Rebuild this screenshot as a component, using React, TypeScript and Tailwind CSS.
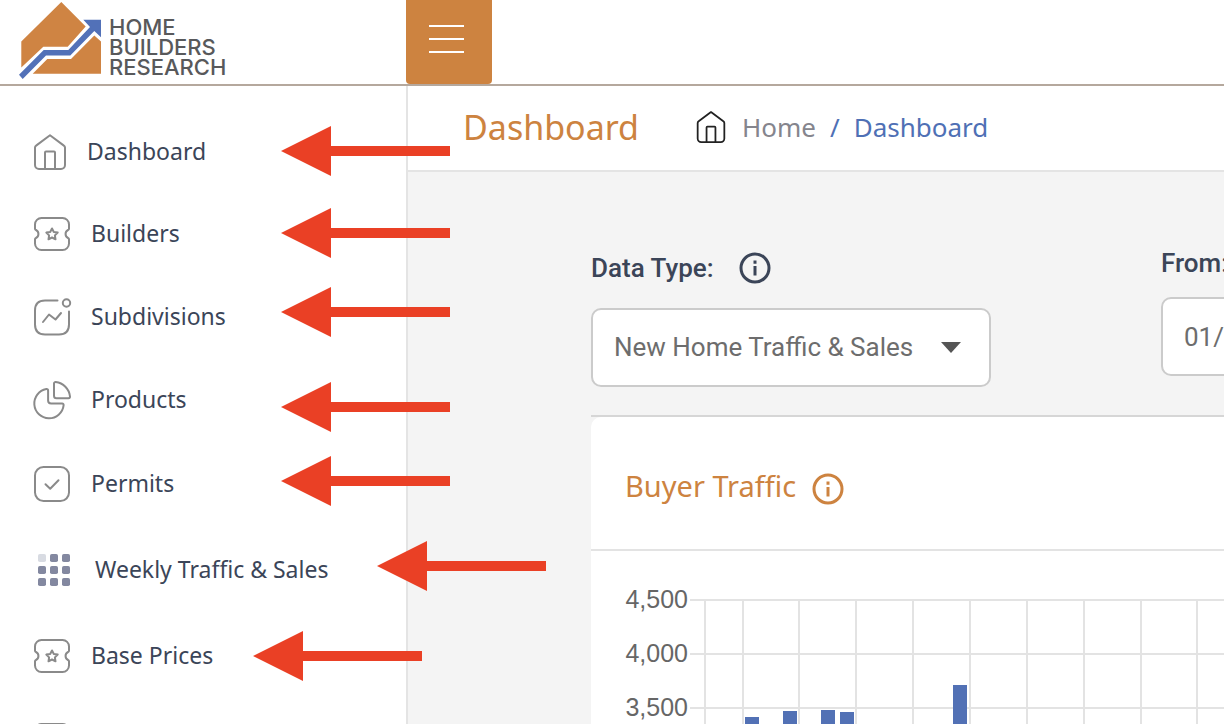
import React from "react";

const HomeIcon = ({ className }: { className: string }) => (
  <svg className={className} viewBox="0 0 32 36" fill="none" stroke="currentColor" strokeWidth="2" strokeLinejoin="round">
    <path d="M1 13.6a2.5 2.5 0 0 1 1.1-2L16 1.2l13.9 10.4a2.5 2.5 0 0 1 1.1 2V31a4 4 0 0 1-4 4H5a4 4 0 0 1-4-4z" />
    <path d="M11 35V18.5a1 1 0 0 1 1-1h8a1 1 0 0 1 1 1V35" />
  </svg>
);

const TicketIcon = () => (
  <svg className="h-[34px] w-9" viewBox="0 0 36 34" fill="none" stroke="currentColor" strokeWidth="2" strokeLinejoin="round">
    <path d="M7.5 1h21A6.5 6.5 0 0 1 35 7.5v4.2c0 .6-.4 1-1 1.3a4.5 4.5 0 0 0 0 8c.6.3 1 .7 1 1.3v4.2a6.5 6.5 0 0 1-6.5 6.5h-21A6.5 6.5 0 0 1 1 26.5v-4.2c0-.6.4-1 1-1.3a4.5 4.5 0 0 0 0-8c-.6-.3-1-.7-1-1.3V7.5A6.5 6.5 0 0 1 7.5 1z" />
    <path d="M18 11.5l1.800 3.500 3.900.6-2.800 2.800.6 3.900-3.500-1.800-3.500 1.800.6-3.900-2.800-2.800 3.900-.6z" />
  </svg>
);

const TrendIcon = () => (
  <svg className="h-[38px] w-9 overflow-visible" viewBox="0 0 36 38" fill="none" stroke="currentColor" strokeWidth="2" strokeLinecap="round" strokeLinejoin="round">
    <path d="M23.500 2.500H11C4 2.500 1 5.500 1 12.500v14c0 7 3 10 10 10h14c7 0 10-3 10-10v-13" />
    <circle cx="32.500" cy="5" r="3.700" />
    <path d="M9 24l6-7.500 6.500 5L27 15" />
  </svg>
);

const PieIcon = () => (
  <svg className="h-[38px] w-9 overflow-visible" viewBox="0 0 36 38" fill="none" stroke="currentColor" strokeWidth="2" strokeLinejoin="round">
    <path d="M20 2.600c0-1 .7-1.600 1.700-1.500A16.300 16.300 0 0 1 36 15.500c.1 1-.5 1.700-1.500 1.700H22.500a2.500 2.500 0 0 1-2.500-2.500z" />
    <path d="M12.300 8.100c1-.2 1.800.4 1.800 1.400V19.500a3 3 0 0 0 3 3H28.200c1 0 1.600.8 1.400 1.800A14.700 14.700 0 1 1 12.300 8.100z" />
  </svg>
);

const CheckIcon = () => (
  <svg className="h-9 w-9" viewBox="0 0 36 36" fill="none" stroke="currentColor" strokeWidth="2" strokeLinecap="round" strokeLinejoin="round">
    <rect x="1" y="1" width="34" height="34" rx="8.500" />
    <path d="M11.500 18.300l4.700 4.500 8.300-8.600" />
  </svg>
);

const GridIcon = () => (
  <svg className="h-8 w-10" viewBox="0 0 40 32" fill="#8388a0">
    <rect x="4" y="0" width="8" height="8" rx="1.800" fill="#d8dbe2" />
    <rect x="16" y="0" width="8" height="8" rx="1.800" />
    <rect x="28" y="0" width="8" height="8" rx="1.800" />
    <rect x="4" y="12" width="8" height="8" rx="1.800" />
    <rect x="16" y="12" width="8" height="8" rx="1.800" />
    <rect x="28" y="12" width="8" height="8" rx="1.800" />
    <rect x="4" y="24" width="8" height="8" rx="1.800" />
    <rect x="16" y="24" width="8" height="8" rx="1.800" />
    <rect x="28" y="24" width="8" height="8" rx="1.800" />
  </svg>
);

const InfoIcon = () => (
  <svg className="h-8 w-8" viewBox="0 0 32 32" fill="none" stroke="currentColor" strokeWidth="3">
    <circle cx="16" cy="16" r="14" />
    <path d="M16 14v9.500M16 8.500v3.200" />
  </svg>
);

const Logo = () => (
  <a href="#" className="flex w-[406px] shrink-0 pl-[19px]">
    <svg className="h-20 w-[82px]" viewBox="19 0 82 80">
      <path fill="#cf8443" d="M21.300 41.500L61.300 2l24.400 24.400L67.700 46.700H43.300L21.300 67.500z" />
      <path fill="#cf8443" d="M32.700 73.800L47.300 59H71l23.300-23.600 7 6.500v31.900z" />
      <path fill="#5271b8" d="M19 74.700L43.700 50h24.600L90 27l-6.700-7.200h18V37.500l-7-6.500-24 24.500H46L22.700 79z" />
    </svg>
    <span className="ml-2 mt-[17px] font-['Inter'] text-[22px] font-medium leading-5 text-[#58595b]">
      HOME
      <br />
      BUILDERS
      <br />
      RESEARCH
    </span>
  </a>
);

const navItems = [
  { label: "Dashboard", icon: <HomeIcon className="h-9 w-8" />, height: "h-20" },
  { label: "Builders", icon: <TicketIcon />, height: "h-[84px]" },
  { label: "Subdivisions", icon: <TrendIcon />, height: "h-[82px]" },
  { label: "Products", icon: <PieIcon />, height: "h-[84px]" },
  { label: "Permits", icon: <CheckIcon />, height: "h-[84px]" },
  { label: "Weekly Traffic & Sales", icon: <GridIcon />, height: "h-[88px]" },
  { label: "Base Prices", icon: <TicketIcon />, height: "h-[84px]" },
  { label: "", icon: <TicketIcon />, height: "h-[84px]" },
];

const arrows = [
  "left-[281px] top-[126px]",
  "left-[281px] top-[208px]",
  "left-[281px] top-[287px]",
  "left-[281px] top-[382px]",
  "left-[281px] top-[456px]",
  "left-[377px] top-[541px]",
  "left-[253px] top-[631px]",
];

const Sidebar = () => (
  <nav className="w-[408px] shrink-0 border-r-2 border-[#e4e4e4] bg-white pt-[26px]">
    <ul>
      {navItems.map((item, i) => (
        <li key={i}>
          <a href="#" className={`flex items-center gap-[21px] pl-[34px] text-[#8a8a8a] ${item.height}`}>
            {item.icon}
            <span className="pb-[3px] text-[23px] leading-8 text-[#3b4558]">{item.label}</span>
          </a>
        </li>
      ))}
    </ul>
  </nav>
);

const gridX = [114, 152, 208, 265, 322, 379, 436, 493, 550, 606];
const gridY = [
  { y: 49, label: "4,500" },
  { y: 103, label: "4,000" },
  { y: 157, label: "3,500" },
];
const bars = [
  { x: 154, y: 166 },
  { x: 192, y: 160 },
  { x: 230, y: 159 },
  { x: 249, y: 161 },
  { x: 362, y: 134 },
];

const TrafficChart = () => (
  <svg className="h-[420px] w-full" role="img" aria-label="Buyer Traffic">
    {gridY.map(({ y, label }) => (
      <g key={label}>
        <line x1="99" x2="100%" y1={y} y2={y} stroke="#e3e3e3" strokeWidth="2" />
        <text x="97" y={y + 8} textAnchor="end" fill="#666" className="font-['Liberation_Sans'] text-[25px]">
          {label}
        </text>
      </g>
    ))}
    {gridX.map((x) => (
      <line key={x} x1={x} x2={x} y1="49" y2="100%" stroke="#e3e3e3" strokeWidth="2" />
    ))}
    {bars.map(({ x, y }) => (
      <rect key={x} x={x} y={y} width="14" height="260" fill="#5271b5" />
    ))}
  </svg>
);

export default function App() {
  return (
    <div className="relative flex h-screen flex-col overflow-hidden bg-white font-['Noto_Sans',sans-serif]">
      <header className="flex h-[86px] shrink-0 border-b-2 border-[#b5a89d]">
        <Logo />
        <button type="button" aria-label="Toggle menu" className="flex h-[84px] w-[86px] flex-col items-center justify-center gap-[11px] rounded-b bg-[#cd8340] pb-1.5 pr-1.5">
          <span className="h-0.5 w-[35px] bg-white" />
          <span className="h-0.5 w-[35px] bg-white" />
          <span className="h-0.5 w-[35px] bg-white" />
        </button>
      </header>

      <div className="flex min-h-0 flex-1">
        <Sidebar />
        <main className="min-w-0 flex-1 overflow-hidden bg-[#f4f4f4]">
          <div className="flex h-[86px] items-center border-b-2 border-[#e4e4e4] bg-white pb-[3px] pl-[55px]">
            <h1 className="text-[34px] leading-10 text-[#cd8340]">Dashboard</h1>
            <div className="ml-[57px] flex items-center text-[26px] leading-8">
              <HomeIcon className="h-8 w-[30px] text-[#222]" />
              <a href="#" className="ml-4 text-[#85858d]">Home</a>
              <span className="mx-3.5 text-[#4f70b5]">/</span>
              <span className="text-[#4f70b5]">Dashboard</span>
            </div>
          </div>

          <div className="pl-[183px] pt-[76px]">
            <div className="flex items-start font-['Roboto'] text-[26px]">
              <div className="w-[570px] shrink-0 pt-1">
                <div className="flex h-8 items-center gap-[25px] text-[#3b4558]">
                  <label htmlFor="data-type" className="font-medium leading-8">Data Type:</label>
                  <InfoIcon />
                </div>
                <div className="relative mt-6 w-[400px]">
                  <select id="data-type" className="h-[79px] w-full appearance-none rounded-[10px] border-2 border-[#cbcbcb] bg-white pl-[21px] text-[#6d6d6d]">
                    <option>New Home Traffic &amp; Sales</option>
                  </select>
                  <svg className="pointer-events-none absolute right-[30px] top-[34px] h-[11px] w-5" viewBox="0 0 20 11" fill="#555">
                    <path d="M0 0h20L10 11z" />
                  </svg>
                </div>
              </div>
              <div className="shrink-0">
                <label htmlFor="from" className="block font-medium leading-[30px] text-[#3b4558]">From:</label>
                <input id="from" type="text" defaultValue="01/" className="mt-[19px] h-[79px] w-[250px] rounded-[10px] border-2 border-[#cbcbcb] bg-white pl-[21px] text-[#6d6d6d]" />
              </div>
            </div>

            <div className="mt-7 border-t-2 border-[#d6d6d6]">
              <section className="rounded-tl-[10px] bg-white">
                <div className="flex h-[134px] items-center gap-4 border-b-2 border-[#e3e3e3] pl-[34px] pt-3 text-[#cd8340]">
                  <h2 className="pb-1.5 text-[29px] leading-9">Buyer Traffic</h2>
                  <InfoIcon />
                </div>
                <TrafficChart />
              </section>
            </div>
          </div>
        </main>
      </div>

      {arrows.map((position) => (
        <svg key={position} className={`pointer-events-none absolute h-[50px] w-[169px] ${position}`} viewBox="0 0 169 50" fill="#ea4025">
          <path d="M0 25L50 0v20h119v10H50v20z" />
        </svg>
      ))}
    </div>
  );
}
